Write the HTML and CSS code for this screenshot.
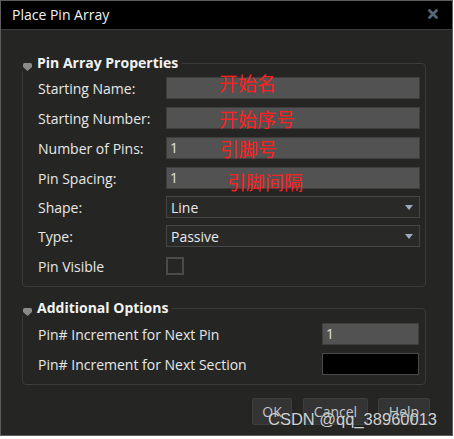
FILE: index.html
```html
<!DOCTYPE html>
<html>
<head>
<meta http-equiv="Content-Type" content="text/html; charset=utf-8"/>
<title>Place Pin Array</title>
<link rel="stylesheet" href="styles.css">
</head>
<body>
<div class="window">
  <div class="titlebar">
    <span class="title">Place Pin Array</span>
    <svg class="close" width="12" height="12" viewBox="0 0 12 12">
      <path d="M2.5 2.5 L9.5 9.5 M9.5 2.5 L2.5 9.5" stroke="#56677a" stroke-width="2.8" stroke-linecap="round"/>
    </svg>
  </div>

  <div class="content">
    <div class="group">
      <div class="group-head">
        <svg class="collapse" width="9" height="8" viewBox="0 0 9 8">
          <path d="M0 1.5 Q0 0 1.5 0 H7.5 Q9 0 9 1.5 V4 L4.5 8 L0 4 Z" fill="#8a8a8a"/>
        </svg>
        <span>Pin Array Properties</span>
      </div>
      <div class="rows">
        <div class="row"><span class="lbl">Starting Name:</span><div class="field"></div></div>
        <div class="row"><span class="lbl">Starting Number:</span><div class="field"></div></div>
        <div class="row"><span class="lbl">Number of Pins:</span><div class="field">1</div></div>
        <div class="row"><span class="lbl">Pin Spacing:</span><div class="field">1</div></div>
        <div class="row sel"><span class="lbl">Shape:</span><div class="combo"><span>Line</span><i class="arrow"></i></div></div>
        <div class="row sel"><span class="lbl">Type:</span><div class="combo"><span>Passive</span><i class="arrow"></i></div></div>
        <div class="row"><span class="lbl">Pin Visible</span><div class="check"></div></div>
      </div>
    </div>

    <div class="group group-extra">
      <div class="group-head">
        <svg class="collapse" width="9" height="8" viewBox="0 0 9 8">
          <path d="M0 1.5 Q0 0 1.5 0 H7.5 Q9 0 9 1.5 V4 L4.5 8 L0 4 Z" fill="#8a8a8a"/>
        </svg>
        <span>Additional Options</span>
      </div>
      <div class="rows rows-extra">
        <div class="row"><span class="lbl wide">Pin# Increment for Next Pin</span><div class="field short">1</div></div>
        <div class="row"><span class="lbl wide">Pin# Increment for Next Section</span><div class="field short dark"></div></div>
      </div>
    </div>

    <div class="buttons">
      <button class="btn btn-ok">OK</button>
      <button class="btn btn-cancel">Cancel</button>
      <button class="btn btn-help">Help</button>
    </div>
  </div>

  <!-- red notes written over the screenshot -->
  <span class="note note1">开始名</span>
  <span class="note note2">开始序号</span>
  <span class="note note3">引脚号</span>
  <span class="note note4">引脚间隔</span>

  <span class="watermark">CSDN @qq_38960013</span>
</div>
</body>
</html>
```

FILE: styles.css
```css
body {
  margin: 0;
  background-color: white;
  font-family: "Open Sans", "Noto Sans", sans-serif;
  font-size: 14px;
}

.window {
  position: relative;
  width: 453px;
  height: 436px;
  box-sizing: border-box;
  border: 1px solid #5c5c5c;
  background-color: #252624;
  color: #eaeaea;
}

.titlebar {
  height: 28px;
  background-color: #000;
  border-bottom: 1px solid #3c3c3c;
  display: flex;
  align-items: center;
  justify-content: space-between;
  padding: 0 13px 0 11px;
}

.title {
  color: #f2f2f2;
  font-size: 14px;
  margin-top: -1px;
}

.close {
  margin-top: -2px;
}

.content {
  padding: 33px 26px 0 21px;
}

.group {
  border: 1px solid #3b3c3a;
  border-radius: 4px;
  padding: 0 5px 9px 15px;
}

.group-head {
  display: flex;
  align-items: flex-start;
  gap: 5px;
  width: max-content;
  height: 17px;
  line-height: 17px;
  margin: -10px 0 0 -16px;
  padding: 0 4px 0 1px;
  background-color: #252624;
  font-weight: bold;
  color: #f2f2f2;
}

.collapse {
  margin-top: 9px;
  flex: none;
}

.rows {
  display: flex;
  flex-direction: column;
  gap: 8px;
  margin-top: 6px;
}

.row {
  display: flex;
  align-items: center;
  height: 22px;
}

.row.sel {
  margin-top: -1px;
}

.lbl {
  width: 128px;
  flex: none;
  color: #e8e8e8;
}

.lbl.wide {
  width: 284px;
}

.field {
  flex: 1;
  height: 22px;
  box-sizing: border-box;
  background-color: #525252;
  border: 1px solid #3e3e3e;
  padding: 0 3px;
  line-height: 20px;
  color: #e0e0e0;
}

.field.short {
  flex: none;
  width: 97px;
}

.field.dark {
  background-color: #000;
  border-color: #4a4a4a;
}

.combo {
  flex: 1;
  height: 22px;
  box-sizing: border-box;
  background-color: #292a28;
  border: 1px solid #464745;
  padding: 0 6px 0 4px;
  display: flex;
  align-items: center;
  justify-content: space-between;
  color: #e8e8e8;
}

.arrow {
  width: 0;
  height: 0;
  border-left: 4px solid transparent;
  border-right: 4px solid transparent;
  border-top: 5px solid #9eabbf;
}

.check {
  width: 18px;
  height: 18px;
  box-sizing: border-box;
  border: 2px solid #4b4b4b;
  background-color: #262624;
}

.group-extra {
  margin-top: 21px;
}

.rows-extra {
  margin-top: 7px;
}

.buttons {
  display: flex;
  justify-content: flex-end;
  gap: 10px;
  margin: 13px -4px 0 0;
}

.btn {
  height: 27px;
  box-sizing: border-box;
  background-color: #343434;
  border: 1px solid #3e3e3e;
  border-radius: 2px;
  color: #c6c6c6;
  font-family: "Open Sans", "Noto Sans", sans-serif;
  font-size: 14px;
  padding: 0;
}

.btn-ok { width: 40px; margin-right: 1px; }
.btn-cancel { width: 65px; }
.btn-help { width: 52px; }

.note {
  position: absolute;
  font-family: "Noto Sans CJK SC", sans-serif;
  font-size: 19px;
  line-height: 19px;
  color: #ff2020;
}

.note1 { left: 218px; top: 72px; }
.note2 { left: 218px; top: 108px; }
.note3 { left: 219px; top: 138px; }
.note4 { left: 226px; top: 171px; }

.watermark {
  position: absolute;
  left: 267px;
  top: 409px;
  font-family: "Liberation Sans", Arial, sans-serif;
  font-size: 16.5px;
  color: rgba(235, 235, 235, 0.9);
  text-shadow: 0 0 1px rgba(0, 0, 0, 0.6);
}
```
